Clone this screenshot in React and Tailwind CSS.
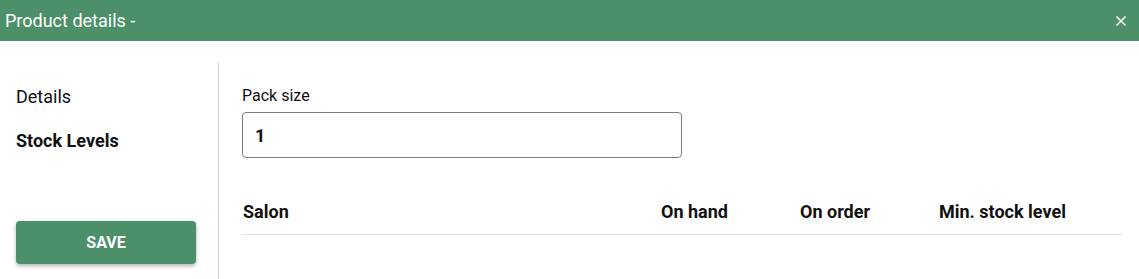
import { X } from "lucide-react";

function App() {
  const cols = ["On hand", "On order", "Min. stock level"];

  return (
    <div className="w-[1139px] h-[279px] bg-white overflow-hidden font-['Roboto',sans-serif] text-[#111]">
      {/* Title bar */}
      <div className="h-[41px] bg-[#4b9068] flex items-center justify-between pl-[5px] pr-[10px]">
        <span className="text-white text-[18px] leading-none">Product details -</span>
        <X className="w-[16px] h-[16px] text-white" strokeWidth={2.5} />
      </div>

      <div className="flex mt-[22px] h-[216px]">
        {/* Side nav */}
        <div className="w-[219px] border-r border-[#d0d0d0] pl-4 pr-[22px] flex flex-col">
          <div className="pt-[23px] text-[18px] leading-[22px]">Details</div>
          <div className="mt-[22px] text-[18px] leading-[22px] font-bold">Stock Levels</div>
          <button className="mt-[69px] h-[43px] w-[180px] rounded bg-[#4b9068] text-white font-bold text-[16px] shadow-[0_2px_4px_rgba(0,0,0,0.3)]">
            SAVE
          </button>
        </div>

        {/* Content */}
        <div className="flex-1 pl-[23px] pr-[17px]">
          <label className="block mt-[23px] text-[16px] leading-[19px]">Pack size</label>
          <div className="mt-[7px] w-[440px] h-[46px] border border-[#7a7a7a] rounded flex items-center px-[12px]">
            <span className="font-bold text-[18px]">1</span>
          </div>

          <div className="mt-[31px] flex items-center h-[46px] border-b border-[#e2e2e2] font-bold text-[18px] pl-px">
            <div className="w-[418px]">Salon</div>
            <div className="w-[139px]">{cols[0]}</div>
            <div className="w-[139px]">{cols[1]}</div>
            <div className="flex-1">{cols[2]}</div>
          </div>
        </div>
      </div>
    </div>
  );
}

export default App;
